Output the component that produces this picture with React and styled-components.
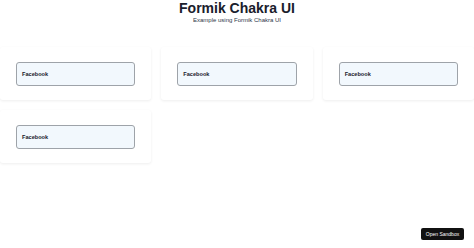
import React from "react";
import styled, { createGlobalStyle } from "styled-components";

const GlobalStyle = createGlobalStyle`
  html, body {
    margin: 0;
    padding: 0;
    background: #fff;
    font-family: "Liberation Sans", Arial, sans-serif;
  }
`;

const Page = styled.div`
  width: 474px;
  min-height: 248px;
`;

const Header = styled.header`
  display: flex;
  flex-direction: column;
  align-items: center;
`;

const Title = styled.h1`
  margin: 0;
  font-size: 14px;
  line-height: 16px;
  font-weight: 700;
  color: #1a202c;
`;

const Subtitle = styled.p`
  margin: 0;
  font-size: 6px;
  line-height: 8px;
  color: #2d3748;
`;

const Grid = styled.div`
  margin-top: 23px;
  display: grid;
  grid-template-columns: repeat(3, 1fr);
  gap: 10px;
`;

const Card = styled.div`
  background: #fff;
  border-radius: 3px;
  box-shadow: 0 1px 3px rgba(0, 0, 0, 0.07);
  padding: 15px 16px 14px;
`;

const Field = styled.div`
  height: 24px;
  box-sizing: border-box;
  display: flex;
  align-items: center;
  padding-left: 5px;
  background: #f2f8fd;
  border: 1.5px solid #9ea3a9;
  border-radius: 3px;
  font-size: 5.6px;
  font-weight: 700;
  color: #1a202c;
`;

const SandboxButton = styled.button`
  position: fixed;
  right: 10px;
  bottom: 8px;
  width: 43px;
  height: 12px;
  padding: 0;
  border: none;
  border-radius: 2px;
  background: #111;
  color: #fff;
  font-family: "Liberation Sans", Arial, sans-serif;
  font-size: 5px;
`;

const fields = ["Facebook", "Facebook", "Facebook", "Facebook"];

export default function App() {
  return (
    <Page>
      <GlobalStyle />
      <Header>
        <Title>Formik Chakra UI</Title>
        <Subtitle>Example using Formik Chakra UI</Subtitle>
      </Header>
      <Grid>
        {fields.map((label, i) => (
          <Card key={i}>
            <Field>{label}</Field>
          </Card>
        ))}
      </Grid>
      <SandboxButton>Open Sandbox</SandboxButton>
    </Page>
  );
}
